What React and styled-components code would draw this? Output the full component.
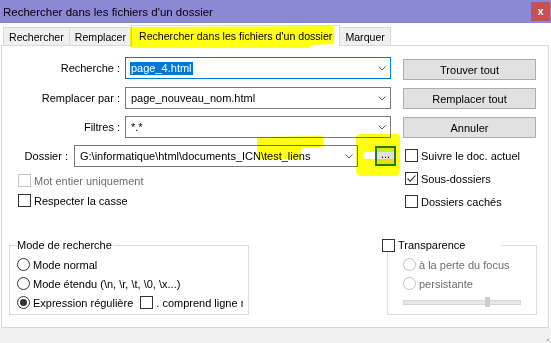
import React from "react";
import styled, { createGlobalStyle } from "styled-components";

const GlobalStyle = createGlobalStyle`
  * { box-sizing: border-box; }
  html, body { margin: 0; padding: 0; background: #ffffff; }
  body {
    font-family: "Liberation Sans", Arial, sans-serif;
    font-size: 11px;
    color: #000;
  }
`;

const Window = styled.div`
  position: relative;
  width: 551px;
  height: 343px;
  overflow: hidden;
  display: flex;
  flex-direction: column;
  background: #fff;
`;

const TitleBar = styled.div`
  flex: none;
  height: 23px;
  display: flex;
  justify-content: space-between;
  align-items: flex-start;
  background: #8b88d5;
`;

const Title = styled.div`
  padding: 6px 0 0 3px;
  font-size: 11.5px;
  line-height: 13px;
`;

const CloseButton = styled.div`
  width: 19px;
  height: 19px;
  margin: 2px 1px 0 0;
  display: flex;
  align-items: center;
  justify-content: center;
  background: #c75050;
  color: #fff;
  font-size: 11px;
  font-weight: bold;
  line-height: 1;
`;

const TabStrip = styled.div`
  flex: none;
  position: relative;
  z-index: 1;
  height: 22px;
  display: flex;
  align-items: flex-end;
  padding-left: 3px;
`;

const Tab = styled.div`
  height: ${(p) => (p.$active ? 21 : 18)}px;
  margin-bottom: ${(p) => (p.$active ? -1 : 0)}px;
  margin-left: -1px;
  padding: 0 ${(p) => (p.$active ? 7 : 5)}px;
  display: flex;
  align-items: center;
  border: 1px solid #d9d9d9;
  border-bottom: none;
  background: ${(p) => (p.$active ? "#fff" : "#f0f0f0")};
  font-size: 10.6px;
  white-space: nowrap;
  &:first-child { margin-left: 0; }
`;

const Panel = styled.div`
  flex: none;
  height: 283px;
  margin: 0 2px 0 1px;
  border: 1px solid #d9d9d9;
  display: flex;
  flex-direction: column;
  justify-content: space-between;
`;

const TopSection = styled.div`
  display: flex;
`;

const LeftCol = styled.div`
  width: 389px;
  padding-top: 11px;
  display: flex;
  flex-direction: column;
`;

const RightCol = styled.div`
  width: 133px;
  margin-left: 12px;
  padding-top: 13px;
  display: flex;
  flex-direction: column;
  gap: 8px;
`;

const FieldRow = styled.div`
  display: flex;
  align-items: center;
  height: 22px;
  margin-top: ${(p) => p.$mt || 0}px;
  gap: ${(p) => p.$gap}px;
`;

const FieldLabel = styled.div`
  flex: none;
  width: ${(p) => p.$w}px;
  text-align: right;
  white-space: nowrap;
`;

const Combo = styled.div`
  flex: none;
  width: ${(p) => p.$w}px;
  height: 22px;
  display: flex;
  align-items: center;
  justify-content: space-between;
  padding: 0 4px 0 5px;
  border: 1px solid ${(p) => (p.$focused ? "#0078d7" : "#7a7a7a")};
  background: #fff;
  white-space: nowrap;
`;

const Selected = styled.span`
  display: inline-block;
  margin-left: -1px;
  padding: 0 1px;
  line-height: 13px;
  background: #0078d7;
  color: #fff;
`;

const Chevron = () => (
  <svg width="8" height="5" viewBox="0 0 8 5">
    <polyline points="0.5,0.5 4,4 7.5,0.5" fill="none" stroke="#5a5a5a" strokeWidth="1" />
  </svg>
);

const BrowseButton = styled.div`
  flex: none;
  width: 21px;
  height: 20px;
  margin-left: 11px;
  display: flex;
  align-items: center;
  justify-content: center;
  border: 2px solid #1d7f2b;
  background: #e1e1e1;
  font-size: 11px;
  line-height: 1;
  padding-bottom: 3px;
`;

const Button = styled.div`
  height: 21px;
  display: flex;
  align-items: center;
  justify-content: center;
  background: #e1e1e1;
  border: 1px solid #adadad;
`;

const CheckList = styled.div`
  display: flex;
  flex-direction: column;
  gap: ${(p) => p.$gap}px;
  margin-top: ${(p) => p.$mt}px;
  padding-left: ${(p) => p.$pl}px;
`;

const CheckRow = styled.label`
  display: flex;
  align-items: center;
  gap: 3px;
  height: 13px;
  white-space: nowrap;
  color: ${(p) => (p.$disabled ? "#6d6d6d" : "#000")};
`;

const Box = styled.span`
  flex: none;
  width: 13px;
  height: 13px;
  margin-left: ${(p) => p.$ml || 0}px;
  border: 1px solid ${(p) => (p.$disabled ? "#c6c6c6" : "#333")};
  background: #fff;
  display: flex;
  align-items: center;
  justify-content: center;
`;

const Checkbox = ({ checked, disabled, ml }) => (
  <Box $disabled={disabled} $ml={ml}>
    {checked && (
      <svg width="11" height="11" viewBox="0 0 11 11">
        <polyline points="1.5,5.5 4.2,8.2 9.5,2.5" fill="none" stroke="#333" strokeWidth="1.1" />
      </svg>
    )}
  </Box>
);

const GroupRow = styled.div`
  display: flex;
  align-items: flex-start;
  justify-content: space-between;
  padding: 0 11px 12px 7px;
`;

const GroupBox = styled.div`
  position: relative;
  width: ${(p) => p.$w}px;
  height: 70px;
  padding: 9px 5px 2px ${(p) => p.$pl}px;
  border: 1px solid #dcdcdc;
`;

const Legend = styled.div`
  position: absolute;
  top: -8px;
  left: ${(p) => p.$left}px;
  width: ${(p) => (p.$w ? `${p.$w}px` : "auto")};
  height: 14px;
  display: flex;
  align-items: center;
  gap: 3px;
  padding: 0 1px;
  background: #fff;
  line-height: 14px;
  white-space: nowrap;
`;

const RadioRow = styled.div`
  display: flex;
  align-items: center;
  gap: 3px;
  height: 19px;
  white-space: nowrap;
  overflow: hidden;
  color: ${(p) => (p.$disabled ? "#6d6d6d" : "#000")};
`;

const Radio = styled.span`
  flex: none;
  width: 13px;
  height: 13px;
  border-radius: 50%;
  border: 1px solid ${(p) => (p.$disabled ? "#bfbfbf" : "#333")};
  background: #fff;
  display: flex;
  align-items: center;
  justify-content: center;
  &::after {
    content: "";
    display: ${(p) => (p.$checked ? "block" : "none")};
    width: 7px;
    height: 7px;
    border-radius: 50%;
    background: #333;
  }
`;

const SliderRow = styled.div`
  height: 19px;
  display: flex;
  align-items: center;
`;

const Track = styled.div`
  position: relative;
  width: 118px;
  height: 5px;
  background: #e7e7e7;
  border: 1px solid #d6d6d6;
`;

const Thumb = styled.div`
  position: absolute;
  top: -4px;
  width: 5px;
  height: 10px;
  background: #cdcdcd;
`;

const Footer = styled.div`
  flex: 1;
  background: #f0f0f0;
  display: flex;
  justify-content: flex-end;
  align-items: flex-end;
`;

const Grip = styled.span`
  width: 2px;
  height: 2px;
  margin: 0 2px 2px 0;
  background: #b5b5b5;
`;

const Marker = styled.svg`
  position: absolute;
  z-index: 5;
  left: 0;
  top: 0;
  width: 551px;
  height: 343px;
  pointer-events: none;
  mix-blend-mode: multiply;
`;

const tabs = [
  "Rechercher",
  "Remplacer",
  "Rechercher dans les fichiers d'un dossier",
  "Marquer",
];

export default function App() {
  return (
    <>
      <GlobalStyle />
      <Window>
        <TitleBar>
          <Title>Rechercher dans les fichiers d'un dossier</Title>
          <CloseButton>x</CloseButton>
        </TitleBar>

        <TabStrip>
          {tabs.map((t, i) => (
            <Tab key={t} $active={i === 2}>{t}</Tab>
          ))}
        </TabStrip>

        <Panel>
          <TopSection>
            <LeftCol>
              <FieldRow $gap={5}>
                <FieldLabel $w={118}>Recherche :</FieldLabel>
                <Combo $w={266} $focused>
                  <span><Selected>page_4.html</Selected></span>
                  <Chevron />
                </Combo>
              </FieldRow>
              <FieldRow $gap={5} $mt={8}>
                <FieldLabel $w={118}>Remplacer par :</FieldLabel>
                <Combo $w={266}>
                  <span>page_nouveau_nom.html</span>
                  <Chevron />
                </Combo>
              </FieldRow>
              <FieldRow $gap={5} $mt={7}>
                <FieldLabel $w={118}>Filtres :</FieldLabel>
                <Combo $w={266}>
                  <span>*.*</span>
                  <Chevron />
                </Combo>
              </FieldRow>
              <FieldRow $gap={6} $mt={7}>
                <FieldLabel $w={66}>Dossier :</FieldLabel>
                <Combo $w={284}>
                  <span>G:\informatique\html\documents_ICN\test_liens</span>
                  <Chevron />
                </Combo>
                <BrowseButton>...</BrowseButton>
              </FieldRow>
              <CheckList $gap={7} $mt={7} $pl={16}>
                <CheckRow $disabled>
                  <Checkbox disabled />
                  Mot entier uniquement
                </CheckRow>
                <CheckRow>
                  <Checkbox />
                  Respecter la casse
                </CheckRow>
              </CheckList>
            </LeftCol>

            <RightCol>
              <Button>Trouver tout</Button>
              <Button>Remplacer tout</Button>
              <Button>Annuler</Button>
              <CheckList $gap={10} $mt={3} $pl={2}>
                <CheckRow>
                  <Checkbox />
                  Suivre le doc. actuel
                </CheckRow>
                <CheckRow>
                  <Checkbox checked />
                  Sous-dossiers
                </CheckRow>
                <CheckRow>
                  <Checkbox />
                  Dossiers cachés
                </CheckRow>
              </CheckList>
            </RightCol>
          </TopSection>

          <GroupRow>
            <GroupBox $w={240} $pl={7}>
              <Legend $left={6}>Mode de recherche</Legend>
              <RadioRow>
                <Radio />
                Mode normal
              </RadioRow>
              <RadioRow>
                <Radio />
                Mode étendu (\n, \r, \t, \0, \x...)
              </RadioRow>
              <RadioRow>
                <Radio $checked />
                Expression régulière
                <Checkbox ml={4} />
                . comprend ligne nouvelle
              </RadioRow>
            </GroupBox>

            <GroupBox $w={150} $pl={15}>
              <Legend $left={-7} $w={120}>
                <Checkbox />
                Transparence
              </Legend>
              <RadioRow $disabled>
                <Radio $disabled />
                à la perte du focus
              </RadioRow>
              <RadioRow $disabled>
                <Radio $disabled />
                persistante
              </RadioRow>
              <SliderRow>
                <Track>
                  <Thumb style={{ left: 81 }} />
                </Track>
              </SliderRow>
            </GroupBox>
          </GroupRow>
        </Panel>

        <Footer>
          <Grip />
        </Footer>

        <Marker viewBox="0 0 551 343">
          <path
            fill="#ffff10"
            d="M130,30 Q130,27 133,27 L331,26 Q334,26 334,29 L334,44 L312,45 Q311,48 308,48 L133,48 Q130,48 130,45 Z"
          />
          <path
            fill="#ffff10"
            d="M257,139 Q257,137 260,137 L320,136 Q323,136 323,139 L323,147 L301,148 L300,157 Q300,159 297,159 L260,159 Q257,159 257,156 Z"
          />
          <path
            fill="#ffff10"
            fillRule="evenodd"
            d="M356,139 Q356,134 361,134 L395,134 Q400,134 400,139 L400,171 Q400,176 395,176 L361,176 Q356,176 356,171 Z M363,152 L394,152 Q398,155.5 394,159 L363,159 Z"
          />
        </Marker>
      </Window>
    </>
  );
}
